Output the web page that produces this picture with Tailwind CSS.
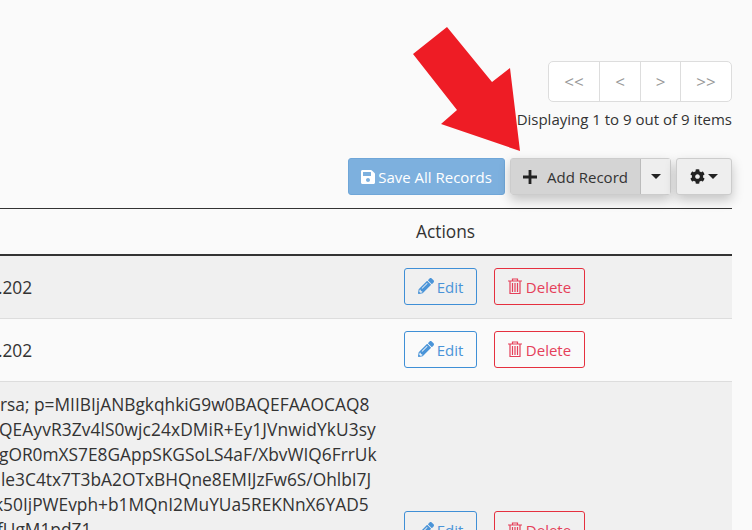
<!DOCTYPE html>
<html lang="en">
<head>
  <meta charset="UTF-8" />
  <title>Zone Records</title>
  <script src="https://cdn.jsdelivr.net/npm/@tailwindcss/browser@4"></script>
</head>
<body class="bg-[#fafafa] font-['Open_Sans',sans-serif] text-[#333]">
  <div class="relative h-[530px] w-[752px] overflow-hidden pr-5 pt-[61px]">

    <!-- pager -->
    <div class="flex justify-end">
      <div class="flex h-[41px] w-[184px] rounded-[5px] border border-[#ddd] bg-white text-[17px] text-[#999]">
        <span class="flex w-[51px] items-center justify-center border-r border-[#ddd]">&lt;&lt;</span>
        <span class="flex w-[41px] items-center justify-center border-r border-[#ddd]">&lt;</span>
        <span class="flex w-[40px] items-center justify-center border-r border-[#ddd]">&gt;</span>
        <span class="flex flex-1 items-center justify-center">&gt;&gt;</span>
      </div>
    </div>
    <p class="mt-[7px] h-[20px] text-right text-[15px] leading-[20px] whitespace-nowrap">Displaying 1 to 9 out of 9 items</p>

    <!-- toolbar -->
    <div class="mt-[29px] flex justify-end">
      <button class="mr-[5px] flex h-[37px] w-[157px] items-center justify-center gap-[3px] rounded-[3px] border border-[#6fa6d8] bg-[#7db0de] text-[15px] text-white">
        <svg class="h-[16px] w-[14px]" viewBox="0 0 448 512" fill="currentColor"><path d="M433.941 129.941l-83.882-83.882A48 48 0 0 0 316.118 32H48C21.49 32 0 53.49 0 80v352c0 26.51 21.49 48 48 48h352c26.51 0 48-21.49 48-48V163.882a48 48 0 0 0-14.059-33.941zM224 416c-35.346 0-64-28.654-64-64 0-35.346 28.654-64 64-64s64 28.654 64 64c0 35.346-28.654 64-64 64zm96-304.52V212c0 6.627-5.373 12-12 12H76c-6.627 0-12-5.373-12-12V108c0-6.627 5.373-12 12-12h228.52c3.183 0 6.235 1.264 8.485 3.515l3.48 3.48A11.996 11.996 0 0 1 320 111.48z"/></svg>
        <span class="mt-[2px]">Save All Records</span>
      </button>
      <div class="mr-[5px] flex h-[37px] w-[161px] rounded-[3px] border border-[#ccc] shadow-[0_5px_12px_rgba(0,0,0,0.22)]">
        <button class="flex w-[130px] items-center gap-[10px] border-r border-[#bbb] bg-[#d4d4d4] pl-[12px] text-[15px]">
          <svg class="h-[14px] w-[14px]" viewBox="0 0 14 14" fill="#222"><path d="M5.6 0h2.8v5.6H14v2.8H8.4V14H5.6V8.4H0V5.6h5.6z"/></svg>
          <span class="mt-[2px]">Add Record</span>
        </button>
        <button class="flex flex-1 items-center justify-center bg-[#eee]">
          <span class="h-0 w-0 border-x-[5px] border-t-[5px] border-x-transparent border-t-[#222]"></span>
        </button>
      </div>
      <button class="flex h-[37px] w-[56px] items-center justify-center gap-[3px] rounded-[3px] border border-[#ccc] bg-[#eee] shadow-[0_5px_12px_rgba(0,0,0,0.22)]">
        <svg class="h-[15px] w-[15px]" viewBox="0 0 512 512" fill="#222"><path d="M487.4 315.7l-42.6-24.6c4.3-23.2 4.3-47 0-70.2l42.6-24.6c4.9-2.8 7.1-8.6 5.5-14-11.1-35.6-30-67.8-54.7-94.6-3.8-4.1-10-5.1-14.8-2.3L380.8 110c-17.9-15.4-38.5-27.3-60.8-35.1V25.8c0-5.6-3.9-10.5-9.4-11.7-36.7-8.2-74.3-7.8-109.2 0-5.5 1.2-9.4 6.1-9.4 11.7V75c-22.2 7.9-42.8 19.8-60.8 35.1L88.7 85.5c-4.9-2.8-11-1.9-14.8 2.3-24.7 26.7-43.6 58.9-54.7 94.6-1.7 5.4.6 11.2 5.5 14L67.3 221c-4.3 23.2-4.3 47 0 70.2l-42.6 24.6c-4.9 2.8-7.1 8.6-5.5 14 11.1 35.6 30 67.8 54.7 94.6 3.8 4.1 10 5.1 14.8 2.3l42.6-24.6c17.9 15.4 38.5 27.3 60.8 35.1v49.2c0 5.6 3.9 10.5 9.4 11.7 36.7 8.2 74.3 7.8 109.2 0 5.5-1.2 9.4-6.1 9.4-11.7v-49.2c22.2-7.9 42.8-19.8 60.8-35.1l42.6 24.6c4.9 2.8 11 1.9 14.8-2.3 24.7-26.7 43.6-58.9 54.7-94.6 1.5-5.5-.7-11.3-5.6-14.1zM256 336c-44.1 0-80-35.9-80-80s35.9-80 80-80 80 35.9 80 80-35.9 80-80 80z"/></svg>
        <span class="h-0 w-0 border-x-[5px] border-t-[5px] border-x-transparent border-t-[#222]"></span>
      </button>
    </div>

    <!-- table -->
    <div class="mt-[13px] w-[732px] border-t border-[#333]">
      <div class="grid h-[47px] grid-cols-[416px_1fr] items-center border-b-2 border-[#333] text-[17.33px]">
        <span></span>
        <span>Actions</span>
      </div>

      <div class="grid h-[63px] grid-cols-[404px_1fr] items-center border-b border-[#ddd] bg-[#f0f0f0] pb-[2px] text-[17.33px]">
        <span class="-ml-[12px] mt-[4px]">1.202</span>
        <div class="flex gap-[17px]">
          <button class="flex h-[37px] w-[73px] items-center justify-center gap-[3px] rounded-[3px] border border-[#3f8fd6] text-[15px] text-[#4a94d8]">
            <svg class="h-[16px] w-[16px]" viewBox="0 0 512 512" fill="currentColor"><path d="M497.9 142.1l-46.1 46.1c-4.7 4.7-12.3 4.7-17 0l-111-111c-4.7-4.7-4.7-12.3 0-17l46.1-46.1c18.7-18.7 49.1-18.7 67.9 0l60.1 60.1c18.8 18.7 18.8 49.1 0 67.9zM284.2 99.8L21.6 362.4.4 483.9c-2.9 16.4 11.4 30.6 27.8 27.8l121.5-21.3 262.6-262.6c4.7-4.7 4.7-12.3 0-17l-111-111c-4.8-4.7-12.4-4.7-17.1 0zM124.1 339.9c-5.5-5.5-5.5-14.3 0-19.8l154-154c5.5-5.5 14.3-5.5 19.8 0s5.5 14.3 0 19.8l-154 154c-5.5 5.5-14.3 5.5-19.8 0zM88 424h48v36.3l-64.5 11.3-31.1-31.1L51.7 376H88v48z"/></svg>
            <span class="mt-[2px]">Edit</span>
          </button>
          <button class="flex h-[37px] w-[91px] items-center justify-center gap-[4px] rounded-[3px] border border-[#e5303f] text-[15px] text-[#e5405a]">
            <svg class="h-[16px] w-[14px]" viewBox="0 0 14 16" fill="none" stroke="currentColor"><path d="M0 3h14M4.5 3V1h5v2M2 3.5v12h10v-12M4.5 5v9M7 5v9M9.5 5v9" stroke-width="1.2"/></svg>
            <span class="mt-[2px]">Delete</span>
          </button>
        </div>
      </div>

      <div class="grid h-[63px] grid-cols-[404px_1fr] items-center border-b border-[#ddd] pb-[2px] text-[17.33px]">
        <span class="-ml-[12px] mt-[4px]">1.202</span>
        <div class="flex gap-[17px]">
          <button class="flex h-[37px] w-[73px] items-center justify-center gap-[3px] rounded-[3px] border border-[#3f8fd6] text-[15px] text-[#4a94d8]">
            <svg class="h-[16px] w-[16px]" viewBox="0 0 512 512" fill="currentColor"><path d="M497.9 142.1l-46.1 46.1c-4.7 4.7-12.3 4.7-17 0l-111-111c-4.7-4.7-4.7-12.3 0-17l46.1-46.1c18.7-18.7 49.1-18.7 67.9 0l60.1 60.1c18.8 18.7 18.8 49.1 0 67.9zM284.2 99.8L21.6 362.4.4 483.9c-2.9 16.4 11.4 30.6 27.8 27.8l121.5-21.3 262.6-262.6c4.7-4.7 4.7-12.3 0-17l-111-111c-4.8-4.7-12.4-4.7-17.1 0zM124.1 339.9c-5.5-5.5-5.5-14.3 0-19.8l154-154c5.5-5.5 14.3-5.5 19.8 0s5.5 14.3 0 19.8l-154 154c-5.5 5.5-14.3 5.5-19.8 0zM88 424h48v36.3l-64.5 11.3-31.1-31.1L51.7 376H88v48z"/></svg>
            <span class="mt-[2px]">Edit</span>
          </button>
          <button class="flex h-[37px] w-[91px] items-center justify-center gap-[4px] rounded-[3px] border border-[#e5303f] text-[15px] text-[#e5405a]">
            <svg class="h-[16px] w-[14px]" viewBox="0 0 14 16" fill="none" stroke="currentColor"><path d="M0 3h14M4.5 3V1h5v2M2 3.5v12h10v-12M4.5 5v9M7 5v9M9.5 5v9" stroke-width="1.2"/></svg>
            <span class="mt-[2px]">Delete</span>
          </button>
        </div>
      </div>

      <div class="grid h-[295px] grid-cols-[404px_1fr] items-center bg-[#f0f0f0] text-[17.33px]">
        <div class="self-start overflow-hidden pt-[10px] leading-[25px] whitespace-nowrap">
          <div>rsa; p=MIIBIjANBgkqhkiG9w0BAQEFAAOCAQ8</div>
          <div class="-ml-[1px] tracking-[0.1px]">QEAyvR3Zv4lS0wjc24xDMiR+Ey1JVnwidYkU3sy</div>
          <div class="-ml-[1px]">gOR0mXS7E8GAppSKGSoLS4aF/XbvWIQ6FrrUk</div>
          <div class="ml-[1px]">le3C4tx7T3bA2OTxBHQne8EMIJzFw6S/OhlbI7J</div>
          <div class="-ml-[6px]">k50IjPWEvph+b1MQnI2MuYUa5REKNnX6YAD5</div>
          <div class="-ml-[3px]">fUgM1pdZ1</div>
        </div>
        <div class="flex gap-[17px]">
          <button class="flex h-[37px] w-[73px] items-center justify-center gap-[3px] rounded-[3px] border border-[#3f8fd6] text-[15px] text-[#4a94d8]">
            <svg class="h-[16px] w-[16px]" viewBox="0 0 512 512" fill="currentColor"><path d="M497.9 142.1l-46.1 46.1c-4.7 4.7-12.3 4.7-17 0l-111-111c-4.7-4.7-4.7-12.3 0-17l46.1-46.1c18.7-18.7 49.1-18.7 67.9 0l60.1 60.1c18.8 18.7 18.8 49.1 0 67.9zM284.2 99.8L21.6 362.4.4 483.9c-2.9 16.4 11.4 30.6 27.8 27.8l121.5-21.3 262.6-262.6c4.7-4.7 4.7-12.3 0-17l-111-111c-4.8-4.7-12.4-4.7-17.1 0zM124.1 339.9c-5.5-5.5-5.5-14.3 0-19.8l154-154c5.5-5.5 14.3-5.5 19.8 0s5.5 14.3 0 19.8l-154 154c-5.5 5.5-14.3 5.5-19.8 0zM88 424h48v36.3l-64.5 11.3-31.1-31.1L51.7 376H88v48z"/></svg>
            <span class="mt-[2px]">Edit</span>
          </button>
          <button class="flex h-[37px] w-[91px] items-center justify-center gap-[4px] rounded-[3px] border border-[#e5303f] text-[15px] text-[#e5405a]">
            <svg class="h-[16px] w-[14px]" viewBox="0 0 14 16" fill="none" stroke="currentColor"><path d="M0 3h14M4.5 3V1h5v2M2 3.5v12h10v-12M4.5 5v9M7 5v9M9.5 5v9" stroke-width="1.2"/></svg>
            <span class="mt-[2px]">Delete</span>
          </button>
        </div>
      </div>
    </div>

    <!-- red annotation arrow on top of the screenshot -->
    <svg class="absolute top-0 left-0 h-[530px] w-[752px]" viewBox="0 0 752 530"><polygon fill="#ee1c25" points="447,27 413,54 457,110 441,124 520,151 510,68 492,82"/></svg>
  </div>
</body>
</html>
